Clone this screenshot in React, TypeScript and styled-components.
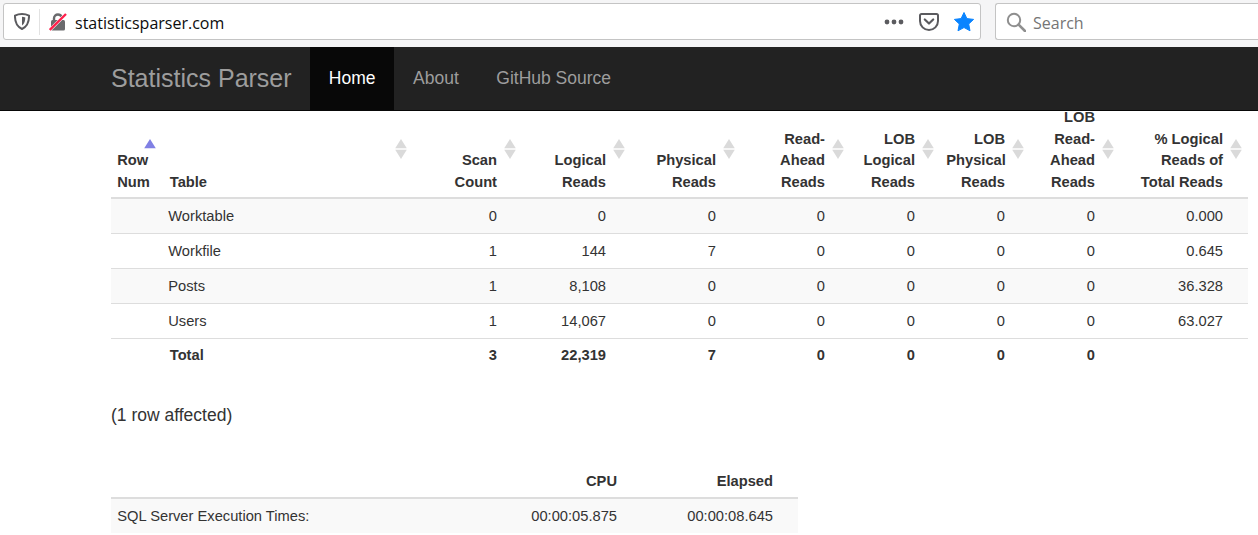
import React from "react";
import styled, { createGlobalStyle } from "styled-components";

const Global = createGlobalStyle`
  html, body { margin: 0; padding: 0; background: #fff; overflow: hidden; }
  body { font-family: "Liberation Sans", Arial, sans-serif; font-size: 17.5px; line-height: 1.42857; color: #333; }
`;
const Chrome = styled.div`
  height: 47px; background: #f5f5f6; display: flex; box-sizing: border-box; padding: 3px 0 0 3px; gap: 14px;
`;
const UrlBar = styled.div`
  width: 978px; height: 37px; box-sizing: border-box; background: #fff; border: 1px solid #c4c4c4; border-radius: 3px;
  display: flex; align-items: center; padding-left: 10px; position: relative;
`;
const SearchBar = styled.div`
  flex: 1; height: 37px; box-sizing: border-box; background: #fff; border: 1px solid #c4c4c4; border-right: none; border-radius: 3px 0 0 3px;
  display: flex; align-items: center; padding-left: 10px; gap: 7px;
`;
const Divider = styled.div`width: 1px; height: 26px; background: #e2e2e2; margin: 0 9px 0 9px;`;
const UrlText = styled.span`font: 16px/1 "Open Sans", sans-serif; color: #0c0c0d; margin-left: 8px; flex: 1; position: relative; top: 1px;`;
const SearchText = styled.span`font: 16px/1 "Open Sans", sans-serif; color: #757575; position: relative; top: 1px;`;
const Actions = styled.div`display: flex; align-items: center; gap: 15px; padding-right: 6px;`;

const Navbar = styled.nav`
  position: relative; z-index: 2; height: 64px; box-sizing: border-box; background: #222; border-bottom: 1px solid #080808;
  display: flex; padding-left: 111px;
`;
const Brand = styled.a`font-size: 25px; line-height: 62px; color: #9d9d9d; margin-right: 18.5px;`;
const NavLink = styled.a<{ $active?: boolean }>`
  padding: 0 18.75px; line-height: 62px; font-size: 17.5px; color: ${p => (p.$active ? "#fff" : "#9d9d9d")};
  background: ${p => (p.$active ? "#080808" : "transparent")};
`;
const Main = styled.main`margin-top: -11px; padding-left: 111px;`;
const Table = styled.table<{ $width: number }>`
  width: ${p => p.$width}px; table-layout: fixed; border-collapse: collapse; border-spacing: 0; font-size: 14.7px; line-height: 21.43px;
`;
const Th = styled.th<{ $left?: boolean; $indent?: boolean }>`
  position: relative; box-sizing: border-box; vertical-align: bottom; font-weight: 700; text-align: ${p => (p.$left ? "left" : "right")};
  padding: 7.25px 25px 4.25px ${p => (p.$indent ? "7.75px" : "6.25px")}; border-bottom: 2px solid #ddd;
`;
const Td = styled.td<{ $left?: boolean; $bold?: boolean; $tall?: number; $shift?: number; $indent?: boolean }>`
  box-sizing: border-box; text-align: ${p => (p.$left ? "left" : "right")}; font-weight: ${p => (p.$bold ? 700 : 400)};
  padding: ${p => 6.25 + (p.$shift ?? 0.5)}px 25px ${p => 6.25 - (p.$shift ?? 0.5)}px ${p => (p.$indent ? "7.75px" : "6.25px")};
  border-top: 1px solid #ddd; height: ${p => p.$tall ?? 35}px;
`;
const Tr = styled.tr<{ $striped?: boolean }>`background: ${p => (p.$striped ? "#f9f9f9" : "transparent")};`;
const SortMark = styled.svg`position: absolute; right: 6px; top: 50%; margin-top: -10px; width: 12px; height: 20px;`;
const Affected = styled.p`margin: 29px 0 0; height: 25px; line-height: 25px; font-size: 17.5px;`;
const SecondTable = styled.div`margin-top: 36px;`;

const Sort = ({ active }: { active?: boolean }) => (
  <SortMark viewBox="0 0 12 20">
    <path d="M6 0 L11.8 9.2 H0.2 Z" fill={active ? "#8080e4" : "#dadada"} />
    {!active && <path d="M0.2 10.8 H11.8 L6 20 Z" fill="#dadada" />}
  </SortMark>
);

const heads: React.ReactNode[] = [
  <>Row Num</>, <>Table</>, <>Scan Count</>, <>Logical Reads</>, <>Physical Reads</>, <>Read-Ahead Reads</>,
  <>LOB Logical Reads</>, <>LOB Physical Reads</>, <>LOB Read-Ahead Reads</>, <>% Logical Reads of Total Reads</>,
];
const widths = [51, 251, 109, 109, 110, 109, 90, 90, 90, 128];
const rows = [
  ["", "Worktable", "0", "0", "0", "0", "0", "0", "0", "0.000"],
  ["", "Workfile", "1", "144", "7", "0", "0", "0", "0", "0.645"],
  ["", "Posts", "1", "8,108", "0", "0", "0", "0", "0", "36.328"],
  ["", "Users", "1", "14,067", "0", "0", "0", "0", "0", "63.027"],
];
const total = ["", "Total", "3", "22,319", "7", "0", "0", "0", "0", ""];

export default function App() {
  return (
    <>
      <Global />
      <Chrome>
        <UrlBar>
          <svg width="16" height="17" viewBox="0 0 16 17">
            <path d="M8 1 C10.5 1 13 1.6 15 2.6 C15.2 8.5 13.5 13.5 8 16 C2.5 13.5 0.8 8.5 1 2.6 C3 1.6 5.5 1 8 1 Z" fill="none" stroke="#5b5b5f" strokeWidth="2" />
            <path d="M8 3.8 C9.2 3.8 10.3 4 11.3 4.4 C11.3 7.5 10.5 10.5 8 12.6 Z" fill="#5b5b5f" />
          </svg>
          <Divider />
          <svg width="18" height="18" viewBox="0 0 18 18">
            <path d="M5 8 V5.5 C5 3 6.8 1.5 9 1.5 C10.5 1.5 12 2.3 12.6 3.8" fill="none" stroke="#6a6a6d" strokeWidth="2.4" />
            <rect x="2" y="7" width="14" height="10.5" rx="1.5" fill="#6a6a6d" />
            <path d="M0.8 17 L17 1" stroke="#fff" strokeWidth="3.2" />
            <path d="M0.8 17 L17 1" stroke="#ff1f4b" strokeWidth="2.4" />
          </svg>
          <UrlText>statisticsparser.com</UrlText>
          <Actions>
            <svg width="20" height="6" viewBox="0 0 20 6">
              <circle cx="3" cy="3" r="2.4" fill="#5b5b5f" /><circle cx="10" cy="3" r="2.4" fill="#5b5b5f" /><circle cx="17" cy="3" r="2.4" fill="#5b5b5f" />
            </svg>
            <svg width="20" height="18" viewBox="0 0 20 18">
              <path d="M2.5 1 H17.5 C18.4 1 19 1.6 19 2.5 V8 C19 13 15 17 10 17 C5 17 1 13 1 8 V2.5 C1 1.6 1.6 1 2.5 1 Z" fill="none" stroke="#5b5b5f" strokeWidth="2" />
              <path d="M5.8 6.5 L10 10.5 L14.2 6.5" fill="none" stroke="#5b5b5f" strokeWidth="2.2" strokeLinecap="round" strokeLinejoin="round" />
            </svg>
            <svg width="20" height="20" viewBox="0 0 20 20">
              <path d="M10 0.5 L12.9 6.6 L19.6 7.4 L14.7 12 L16 18.8 L10 15.5 L4 18.8 L5.3 12 L0.4 7.4 L7.1 6.6 Z" fill="#0a84ff" stroke="#0a84ff" strokeWidth="1" strokeLinejoin="round" />
            </svg>
          </Actions>
        </UrlBar>
        <SearchBar>
          <svg width="20" height="20" viewBox="0 0 20 20">
            <circle cx="8" cy="8" r="6.2" fill="none" stroke="#8f8f8f" strokeWidth="2" />
            <path d="M12.6 12.6 L19 19" stroke="#8f8f8f" strokeWidth="2.6" strokeLinecap="round" />
          </svg>
          <SearchText>Search</SearchText>
        </SearchBar>
      </Chrome>
      <Navbar>
        <Brand>Statistics Parser</Brand>
        <NavLink $active>Home</NavLink>
        <NavLink>About</NavLink>
        <NavLink>GitHub Source</NavLink>
      </Navbar>
      <Main>
        <Table $width={1137}>
          <colgroup>{widths.map((w, i) => <col key={i} style={{ width: w }} />)}</colgroup>
          <thead>
            <tr>
              {heads.map((h, i) => (
                <Th key={i} $left={i < 2} $indent={i === 1}>{h}<Sort active={i === 0} /></Th>
              ))}
            </tr>
          </thead>
          <tbody>
            {rows.map((r, i) => (
              <Tr key={i} $striped={i % 2 === 0}>
                {r.map((c, j) => <Td key={j} $left={j < 2}>{c}</Td>)}
              </Tr>
            ))}
            <Tr>{total.map((c, j) => <Td key={j} $left={j < 2} $bold $shift={-0.5} $indent={j === 1}>{c}</Td>)}</Tr>
          </tbody>
        </Table>
        <Affected>(1 row affected)</Affected>
        <SecondTable>
          <Table $width={687}>
            <colgroup><col style={{ width: 375 }} /><col style={{ width: 156 }} /><col style={{ width: 156 }} /></colgroup>
            <thead>
              <tr><Th $left></Th><Th>CPU</Th><Th>Elapsed</Th></tr>
            </thead>
            <tbody>
              <Tr $striped>
                <Td $left $tall={34} $shift={1}>SQL Server Execution Times:</Td>
                <Td $tall={34} $shift={1}>00:00:05.875</Td>
                <Td $tall={34} $shift={1}>00:00:08.645</Td>
              </Tr>
            </tbody>
          </Table>
        </SecondTable>
      </Main>
    </>
  );
}
